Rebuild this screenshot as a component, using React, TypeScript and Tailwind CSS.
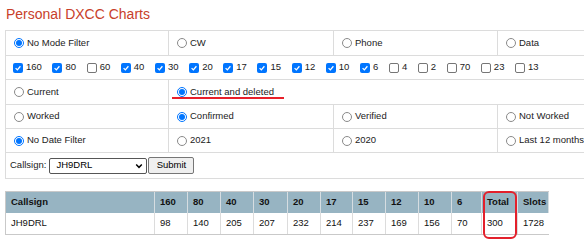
import React from "react";

// 라디오 / 체크박스 (scaled-down native look)
function Radio({ on }: { on?: boolean }) {
  return on ? (
    <span className="flex h-[10px] w-[10px] flex-shrink-0 items-center justify-center rounded-full border border-[#0075ff] bg-white">
      <span className="h-[6px] w-[6px] rounded-full bg-[#0075ff]" />
    </span>
  ) : (
    <span className="h-[10px] w-[10px] flex-shrink-0 rounded-full border border-[#8a8a8a] bg-white" />
  );
}

function Check({ on }: { on?: boolean }) {
  return on ? (
    <span className="flex h-[10px] w-[10px] flex-shrink-0 items-center justify-center rounded-[2px] bg-[#0075ff]">
      <svg viewBox="0 0 10 10" className="h-[8px] w-[8px]">
        <path d="M2 5.2 L4.2 7.3 L8 2.8" fill="none" stroke="#fff" strokeWidth="1.6" />
      </svg>
    </span>
  ) : (
    <span className="h-[10px] w-[10px] flex-shrink-0 rounded-[2px] border border-[#767676] bg-white" />
  );
}

function Opt({ label, on }: { label: string; on?: boolean }) {
  return (
    <span className="flex items-center gap-[3px]">
      <Radio on={on} />
      <span>{label}</span>
    </span>
  );
}

const bands: [string, boolean][] = [
  ["160", true], ["80", true], ["60", false], ["40", true], ["30", true], ["20", true],
  ["17", true], ["15", true], ["12", true], ["10", true], ["6", true], ["4", false],
  ["2", false], ["70", false], ["23", false], ["13", false],
];

const cols = ["Callsign", "160", "80", "40", "30", "20", "17", "15", "12", "10", "6", "Total", "Slots"];
const vals = ["JH9DRL", "98", "140", "205", "207", "232", "214", "237", "169", "156", "70", "300", "1728"];

function Row4({ items, h }: { items: [string, boolean][]; h: string }) {
  return (
    <div className={`flex border-b border-[#dcdcdc] ${h}`}>
      {items.map(([l, on], i) => (
        <div
          key={l}
          className={`flex items-center border-r border-[#dcdcdc] pl-[8px] ${
            i === 0 ? "w-[163px]" : i === 1 ? "w-[165px]" : "w-[164px]"
          }`}
        >
          <Opt label={l} on={on} />
        </div>
      ))}
    </div>
  );
}

export default function App() {
  return (
    <div className="h-[240px] w-[584px] overflow-hidden bg-white font-['Liberation_Sans',Arial,sans-serif] text-[9.5px] text-[#222]">
      <h1 className="pl-[6px] pt-[6px] text-[14px] leading-[16px] text-[#c8402a]">Personal DXCC Charts</h1>

      {/* 필터 표 */}
      <div className="ml-[5px] mt-[8px] w-[660px] border-l border-t border-[#dcdcdc]">
        <Row4 h="h-[25px]" items={[["No Mode Filter", true], ["CW", false], ["Phone", false], ["Data", false]]} />
        <div className="flex h-[24px] items-center gap-[10.6px] border-b border-[#dcdcdc] pl-[7px]">
          {bands.map(([b, on]) => (
            <span key={b} className="flex items-center gap-[3px]">
              <Check on={on} />
              <span>{b}</span>
            </span>
          ))}
        </div>
        <div className="flex h-[25px] border-b border-[#dcdcdc]">
          <div className="flex w-[163px] items-center border-r border-[#dcdcdc] pl-[8px]">
            <Opt label="Current" />
          </div>
          <div className="relative flex flex-1 items-center pl-[8px]">
            <Opt label="Current and deleted" on />
            <span className="absolute left-[3px] top-[17px] h-[2px] w-[112px] bg-[#e8202a]" />
          </div>
        </div>
        <Row4 h="h-[24px]" items={[["Worked", false], ["Confirmed", true], ["Verified", false], ["Not Worked", false]]} />
        <Row4 h="h-[24px]" items={[["No Date Filter", true], ["2021", false], ["2020", false], ["Last 12 months", false]]} />
        <div className="flex h-[26px] items-center gap-[3px] border-b border-[#dcdcdc] pl-[4px]">
          <span>Callsign:</span>
          <div className="flex h-[16px] w-[98px] items-center justify-between rounded-[2px] border border-[#555] pl-[6px] pr-[3px] text-[#000]">
            <span>JH9DRL</span>
            <svg viewBox="0 0 10 10" className="h-[8px] w-[8px]">
              <path d="M1.5 3.2 L5 6.7 L8.5 3.2" fill="none" stroke="#000" strokeWidth="1.8" />
            </svg>
          </div>
          <button className="-ml-[2px] flex h-[17px] w-[46px] items-center justify-center rounded-[2px] border border-[#767676] bg-[#efefef] text-[#000]">
            Submit
          </button>
        </div>
      </div>

      {/* 결과 표 */}
      <div className="relative ml-[5px] mt-[12px] w-[544px]">
        <div className="grid grid-cols-[149px_33px_33px_33px_34px_33px_32px_33px_33px_33px_30px_36px_31px] border border-[#c9c9c9]">
          {cols.map((c) => (
            <div
              key={c}
              className="flex h-[21px] items-center border-r border-[#d6dde1] bg-[#97b4c2] pl-[5px] font-bold text-[#111] last:border-r-0"
            >
              {c}
            </div>
          ))}
          {vals.map((v, i) => (
            <div
              key={i}
              className="flex h-[21px] items-center border-r border-[#dcdcdc] bg-white pl-[5px] text-[#111] last:border-r-0"
            >
              {v}
            </div>
          ))}
        </div>
        <span className="absolute left-[478px] top-0 h-[48px] w-[34px] rounded-[6px] border-[2.5px] border-[#e3202b]" />
      </div>
    </div>
  );
}
